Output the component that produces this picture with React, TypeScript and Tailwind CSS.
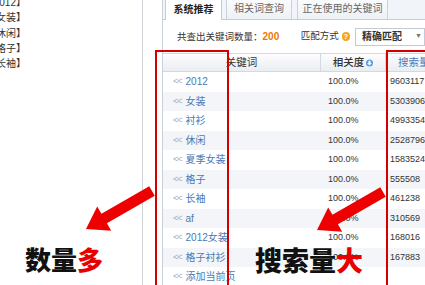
import React from 'react';

const sideItems = ['【2012】', '【女装】', '【休闲】', '【格子】', '【长袖】'];

const rows: [string, string][] = [
  ['2012', '9603117'],
  ['女装', '5303906'],
  ['衬衫', '4993354'],
  ['休闲', '2528796'],
  ['夏季女装', '1583524'],
  ['格子', '555508'],
  ['长袖', '461238'],
  ['af', '310569'],
  ['2012女装', '168016'],
  ['格子衬衫', '167883'],
  ['添加当前页', ''],
];

// arrow outline from tail to tip
function arrowPoints(tx: number, ty: number, px: number, py: number, s = 5.5, h = 14, l = 21) {
  const len = Math.hypot(px - tx, py - ty);
  const dx = (px - tx) / len;
  const dy = (py - ty) / len;
  const nx = -dy;
  const ny = dx;
  const bx = px - dx * l;
  const by = py - dy * l;
  const pts = [
    [tx + nx * s, ty + ny * s],
    [bx + nx * s, by + ny * s],
    [bx + nx * h, by + ny * h],
    [px, py],
    [bx - nx * h, by - ny * h],
    [bx - nx * s, by - ny * s],
    [tx - nx * s, ty - ny * s],
  ];
  return pts.map((p) => p.join(',')).join(' ');
}

export default function App() {
  return (
    <div className="relative flex w-[425px] h-[285px] overflow-hidden bg-white font-['Liberation_Sans','Noto_Sans_CJK_SC',sans-serif] text-[#333]">
      {/* left list */}
      <aside className="w-[143px] shrink-0 border-r border-[#cfd3d8]">
        <div className="w-[26px] -mt-[5px]">
          {sideItems.map((t) => (
            <div key={t} className="flex h-[15.25px] items-center justify-end whitespace-nowrap text-[10px] text-[#333]">
              {t}
            </div>
          ))}
        </div>
      </aside>
      <div className="w-[19px] shrink-0" />

      {/* main panel */}
      <main className="min-w-0 flex-1 overflow-hidden border-l border-[#c9d2dc]">
        {/* tabs */}
        <div className="flex h-[20px] items-end gap-[4px] border-b border-[#c3cdd8] bg-[#f1f4f8] pl-[2px]">
          <div className="-mb-px flex h-[22px] w-[57px] items-center justify-center border border-b-0 border-[#c3cdd8] bg-white text-[10px] font-bold text-[#222]">
            系统推荐
          </div>
          <div className="flex h-[22px] w-[66px] items-center justify-center border border-b-0 border-[#c9d1db] bg-linear-to-b from-[#fbfcfd] to-[#eef1f5] text-[10px] text-[#666]">
            相关词查询
          </div>
          <div className="ml-px flex h-[22px] w-[91px] items-center justify-center border border-b-0 border-[#c9d1db] bg-linear-to-b from-[#fbfcfd] to-[#eef1f5] text-[10px] text-[#666]">
            正在使用的关键词
          </div>
        </div>

        {/* summary row */}
        <div className="flex h-[33px] items-center pl-[14px] text-[9.5px]">
          <span className="w-[133px] whitespace-nowrap">
            共查出关键词数量：<span className="font-bold text-[10px] text-[#f07800]">200</span>
          </span>
          <span className="whitespace-nowrap">匹配方式</span>
          <span className="ml-[3px] flex h-[9px] w-[9px] items-center justify-center rounded-full bg-[#f5a623] text-[7px] font-bold leading-none text-white">
            ?
          </span>
          <div className="ml-[5px] flex h-[18px] w-[70px] shrink-0 items-center border border-[#c4cad2] bg-white pl-[6px] text-[10px] font-bold">
            精确匹配
            <span className="ml-[13px] text-[7px] text-[#777]">▼</span>
          </div>
        </div>

        {/* table */}
        <div className="w-[288px]">
          <div className="grid h-[19px] grid-cols-[158px_65px_65px] border-y border-[#d3d9e0] bg-linear-to-b from-[#fdfdfe] to-[#eaedf1] text-[10.5px]">
            <div className="flex items-center justify-center border-r border-[#d3d9e0]">关键词</div>
            <div className="flex items-center justify-center gap-[2px] border-r border-[#d3d9e0] font-medium">
              相关度
              <svg width="7" height="8" viewBox="0 0 7 8">
                <circle cx="3.5" cy="4" r="3.5" fill="#5a9be0" />
                <path d="M2.5 1.8h2v2.2h1.4L3.5 6.6 1.1 4h1.4z" fill="#fff" />
              </svg>
            </div>
            <div className="flex items-center pl-[12px] text-[#4a7ab5]">搜索量</div>
          </div>
          {rows.map(([kw, vol], i) => (
            <div
              key={kw}
              className={`grid h-[19.5px] grid-cols-[158px_65px_65px] items-center ${i % 2 === 1 ? 'bg-[#f3f5f8]' : 'bg-white'}`}
            >
              <div className="flex items-center whitespace-nowrap pl-[10px] text-[10px]">
                <span className="mr-[4px] text-[9px] tracking-[-1px] text-[#9cb0c8]">&lt;&lt;</span>
                <span className="text-[#4a7ab5]">{kw}</span>
              </div>
              <div className="pl-[7px] text-[9px]">{vol ? '100.0%' : ''}</div>
              <div className="pl-[4px] text-[9px]">{vol}</div>
            </div>
          ))}
        </div>
      </main>

      {/* red highlight boxes */}
      <div className="absolute left-[155px] top-[50px] h-[260px] w-[74px] border-2 border-[#d40000]" />
      <div className="absolute left-[386px] top-[50px] h-[260px] w-[70px] border-2 border-[#d40000]" />

      {/* arrows */}
      <svg className="pointer-events-none absolute left-0 top-0" width="425" height="285">
        <polygon points={arrowPoints(152, 191, 86, 229)} fill="#ee0000" />
        <polygon points={arrowPoints(383, 192, 317, 230)} fill="#ee0000" />
      </svg>

      {/* captions */}
      <div className="absolute left-[25px] top-[246px] whitespace-nowrap font-['Noto_Sans_CJK_SC',sans-serif] text-[26px] font-black leading-none text-[#111]">
        数量<span className="text-[#e60000]">多</span>
      </div>
      <div className="absolute left-[255px] top-[246px] whitespace-nowrap font-['Noto_Sans_CJK_SC',sans-serif] text-[27px] font-black leading-none text-[#111]">
        搜索量<span className="text-[#e60000]">大</span>
      </div>
    </div>
  );
}
